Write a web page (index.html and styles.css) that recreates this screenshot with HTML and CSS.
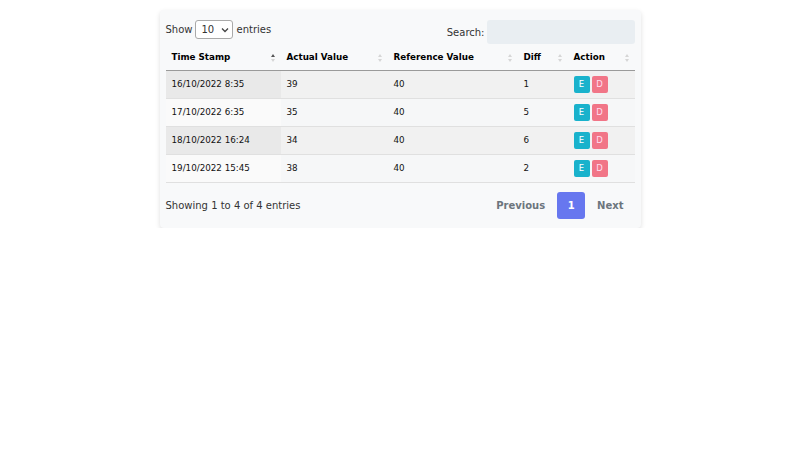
FILE: index.html
```html
<!DOCTYPE html>
<html lang="en">
<head>
<meta charset="utf-8">
<title>Readings</title>
<link rel="stylesheet" href="styles.css">
</head>
<body>
<div class="card">
  <div class="top">
    <div class="length">
      <span>Show</span>
      <span class="select-wrap">
        <select class="select"><option>10</option><option>25</option><option>50</option></select>
        <svg class="chev" width="8" height="6" viewBox="0 0 8 6"><path d="M1 1.5 L4 4.5 L7 1.5" fill="none" stroke="#444" stroke-width="1.3"/></svg>
      </span>
      <span>entries</span>
    </div>
    <label class="search">Search:<input class="search-input" type="text"></label>
  </div>
  <table class="tbl">
    <colgroup>
      <col class="c1"><col class="c2"><col class="c3"><col class="c4"><col class="c5">
    </colgroup>
    <thead>
      <tr>
        <th class="sort asc">Time Stamp</th>
        <th class="sort">Actual Value</th>
        <th class="sort">Reference Value</th>
        <th class="sort">Diff</th>
        <th class="sort">Action</th>
      </tr>
    </thead>
    <tbody>
      <tr class="odd"><td class="sorted">16/10/2022 8:35</td><td>39</td><td>40</td><td>1</td><td><span class="btn e">E</span><span class="btn d">D</span></td></tr>
      <tr class="even"><td class="sorted">17/10/2022 6:35</td><td>35</td><td>40</td><td>5</td><td><span class="btn e">E</span><span class="btn d">D</span></td></tr>
      <tr class="odd"><td class="sorted">18/10/2022 16:24</td><td>34</td><td>40</td><td>6</td><td><span class="btn e">E</span><span class="btn d">D</span></td></tr>
      <tr class="even"><td class="sorted">19/10/2022 15:45</td><td>38</td><td>40</td><td>2</td><td><span class="btn e">E</span><span class="btn d">D</span></td></tr>
    </tbody>
  </table>
  <div class="bottom">
    <div class="info">Showing 1 to 4 of 4 entries</div>
    <div class="pager">
      <span class="plink">Previous</span>
      <span class="page current">1</span>
      <span class="plink">Next</span>
    </div>
  </div>
</div>
</body>
</html>
```
FILE: styles.css
```css
html, body {
  margin: 0;
  padding: 0;
  background: #ffffff;
  font-family: "DejaVu Sans", Verdana, sans-serif;
  color: #333;
}

.card {
  width: 469px;
  margin: 10px auto 0;
  padding: 10px 6px 9px;
  background: #f8f9fa;
  border-radius: 4px;
  box-shadow: 0 2px 5px rgba(0, 0, 0, 0.13);
  font-size: 10px;
}

.top {
  display: flex;
  justify-content: space-between;
  align-items: flex-start;
  height: 24px;
}

.length {
  display: flex;
  align-items: center;
  height: 19px;
  gap: 3px;
  color: #333;
}

.select-wrap {
  position: relative;
  display: inline-block;
  height: 19px;
}

.select {
  appearance: none;
  -webkit-appearance: none;
  width: 38px;
  height: 19px;
  box-sizing: border-box;
  border: 1px solid #a9a9a9;
  border-radius: 3px;
  background: #fff;
  font-family: "DejaVu Sans", sans-serif;
  font-size: 10px;
  color: #333;
  padding: 0 0 0 5px;
  margin: 0;
}

.chev {
  position: absolute;
  right: 4px;
  top: 7px;
  pointer-events: none;
}

.search {
  display: flex;
  align-items: center;
  gap: 2px;
  color: #333;
}

.search-input {
  width: 148px;
  height: 24px;
  box-sizing: border-box;
  border: none;
  border-radius: 3px;
  background: #e9eef2;
  margin: 0;
  padding: 0 6px;
}

.tbl {
  width: 469px;
  margin-top: 1px;
  border-collapse: collapse;
  table-layout: fixed;
  font-size: 8.75px;
  color: #111;
}

.c1 { width: 115px; }
.c2 { width: 107px; }
.c3 { width: 130px; }
.c4 { width: 50px; }
.c5 { width: 67px; }

.tbl th {
  position: relative;
  height: 25px;
  padding: 0 6px;
  text-align: left;
  font-weight: bold;
  color: #000;
  border-bottom: 1px solid #9a9a9a;
  box-sizing: border-box;
}

.sort::before,
.sort::after {
  content: "";
  position: absolute;
  right: 6px;
  width: 0;
  height: 0;
  border-left: 2px solid transparent;
  border-right: 2px solid transparent;
}

.sort::before {
  top: 9px;
  border-bottom: 3px solid #d6d6d6;
}

.sort::after {
  top: 14px;
  border-top: 3px solid #d6d6d6;
}

.asc::before {
  border-bottom-color: #555;
}

.tbl td {
  height: 27px;
  padding: 0 6px;
  border-bottom: 1px solid #e0e0e0;
  color: #111;
}

.odd td { background: #f1f1f1; }
.odd td.sorted { background: #e9e9e9; }
.even td { background: #f6f7f8; }
.even td.sorted { background: #fafafa; }

.btn {
  display: inline-block;
  width: 16px;
  height: 17px;
  line-height: 17px;
  text-align: center;
  color: #fff;
  font-size: 8.5px;
  border-radius: 2px;
  vertical-align: middle;
}

.btn.e { background: #19b2cc; }
.btn.d { background: #f17587; margin-left: 2px; color: #fde; }

.bottom {
  display: flex;
  justify-content: space-between;
  align-items: center;
  margin-top: 9px;
}

.info {
  color: #333;
}

.pager {
  display: flex;
  align-items: center;
  gap: 12px;
  margin-right: 11px;
}

.plink {
  font-weight: bold;
  color: #6c757d;
}

.page.current {
  width: 28px;
  height: 27px;
  line-height: 27px;
  text-align: center;
  background: #6777ef;
  color: #fff;
  font-weight: bold;
  border-radius: 3px;
}
```
